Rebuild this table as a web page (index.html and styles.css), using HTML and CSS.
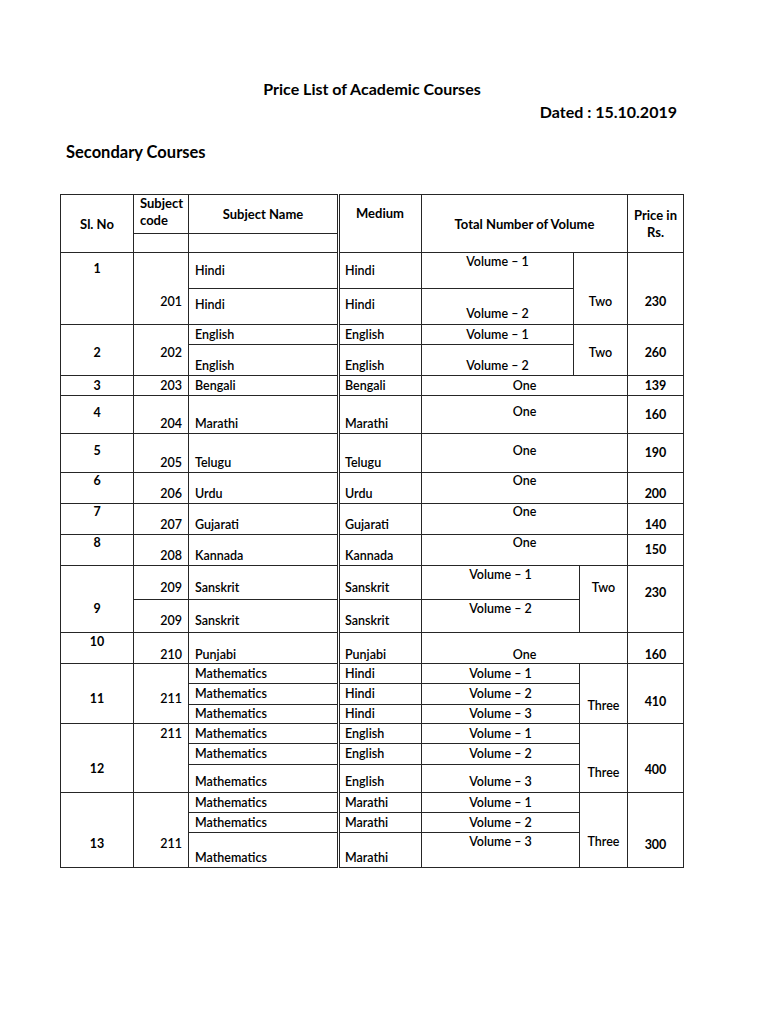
FILE: index.html
```html
<!DOCTYPE html>
<html lang="en">
<head>
<meta charset="utf-8">
<title>Price List of Academic Courses</title>
<link rel="stylesheet" href="styles.css">
</head>
<body>
<div class="page">
  <h1 class="title">Price List of Academic Courses</h1>
  <p class="dated">Dated : 15.10.2019</p>
  <h2 class="section">Secondary Courses</h2>
  <table class="price">
    <colgroup>
      <col class="w-sl"><col class="w-code"><col class="w-name"><col class="w-med"><col class="w-vol"><col class="w-gap"><col class="w-cnt"><col class="w-price">
    </colgroup>
    <thead>
      <tr class="h39">
        <th rowspan="2" class="c">Sl. No</th>
        <th class="l vt code-h">Subject<br>code</th>
        <th class="c">Subject Name</th>
        <th rowspan="2" class="c vt pt10 med">Medium</th>
        <th colspan="3" rowspan="2" class="c">Total Number of Volume</th>
        <th rowspan="2" class="c two-line">Price in<br>Rs.</th>
      </tr>
      <tr class="h19"><th></th><th></th></tr>
    </thead>
    <tbody>
      <tr class="h36">
        <td rowspan="2" class="sl vt pt8">1</td>
        <td rowspan="2" class="code vt pt41">201</td>
        <td class="name">Hindi</td>
        <td class="med">Hindi</td>
        <td class="c vt pt1">Volume – 1</td>
        <td colspan="2" rowspan="2" class="c vt pt41">Two</td>
        <td rowspan="2" class="amt vt pt41">230</td>
      </tr>
      <tr class="h36">
        <td class="name vt pt8">Hindi</td>
        <td class="med vt pt8">Hindi</td>
        <td class="c vb pb2">Volume – 2</td>
      </tr>

      <tr class="h20">
        <td rowspan="2" class="sl vt pt20">2</td>
        <td rowspan="2" class="code vt pt20">202</td>
        <td class="name">English</td>
        <td class="med">English</td>
        <td class="c">Volume – 1</td>
        <td colspan="2" rowspan="2" class="c vt pt20">Two</td>
        <td rowspan="2" class="amt vt pt20">260</td>
      </tr>
      <tr class="h31">
        <td class="name vb pb1">English</td>
        <td class="med vb pb1">English</td>
        <td class="c vb pb1">Volume – 2</td>
      </tr>

      <tr class="h20">
        <td class="sl">3</td>
        <td class="code">203</td>
        <td class="name">Bengali</td>
        <td class="med">Bengali</td>
        <td colspan="3" class="c">One</td>
        <td class="amt">139</td>
      </tr>

      <tr class="h38">
        <td class="sl vt pt9">4</td>
        <td class="code vb pb1">204</td>
        <td class="name vb pb1">Marathi</td>
        <td class="med vb pb1">Marathi</td>
        <td colspan="3" class="c vt pt8">One</td>
        <td class="amt">160</td>
      </tr>

      <tr class="h39">
        <td class="sl vt pt9">5</td>
        <td class="code vb pb1">205</td>
        <td class="name vb pb1">Telugu</td>
        <td class="med vb pb1">Telugu</td>
        <td colspan="3" class="c vt pt9">One</td>
        <td class="amt">190</td>
      </tr>

      <tr class="h31">
        <td class="sl vt">6</td>
        <td class="code vb pb1">206</td>
        <td class="name vb pb1">Urdu</td>
        <td class="med vb pb1">Urdu</td>
        <td colspan="3" class="c vt">One</td>
        <td class="amt vb pb1">200</td>
      </tr>

      <tr class="h31">
        <td class="sl vt">7</td>
        <td class="code vb pb1">207</td>
        <td class="name vb pb1">Gujarati</td>
        <td class="med vb pb1">Gujarati</td>
        <td colspan="3" class="c vt">One</td>
        <td class="amt vb pb1">140</td>
      </tr>

      <tr class="h31">
        <td class="sl vt">8</td>
        <td class="code vb pb1">208</td>
        <td class="name vb pb1">Kannada</td>
        <td class="med vb pb1">Kannada</td>
        <td colspan="3" class="c vt">One</td>
        <td class="amt">150</td>
      </tr>

      <tr class="h34">
        <td rowspan="2" class="sl vt pt35">9</td>
        <td class="code vb pb3">209</td>
        <td class="name vb pb3">Sanskrit</td>
        <td class="med vb pb3">Sanskrit</td>
        <td colspan="2" class="c vt pt1">Volume – 1</td>
        <td rowspan="2" class="c vt pt14">Two</td>
        <td rowspan="2" class="amt vt pt19">230</td>
      </tr>
      <tr class="h33">
        <td class="code vb pb3">209</td>
        <td class="name vb pb3">Sanskrit</td>
        <td class="med vb pb3">Sanskrit</td>
        <td colspan="2" class="c vt pt1">Volume – 2</td>
      </tr>

      <tr class="h31">
        <td class="sl vt pt1">10</td>
        <td class="code vb">210</td>
        <td class="name vb">Punjabi</td>
        <td class="med vb">Punjabi</td>
        <td colspan="3" class="c vb">One</td>
        <td class="amt vb">160</td>
      </tr>

      <tr class="h20">
        <td rowspan="3" class="sl vt pt27">11</td>
        <td rowspan="3" class="code vt pt27">211</td>
        <td class="name">Mathematics</td>
        <td class="med">Hindi</td>
        <td colspan="2" class="c">Volume – 1</td>
        <td rowspan="3" class="c vt pt34">Three</td>
        <td rowspan="3" class="amt vt pt30">410</td>
      </tr>
      <tr class="h21">
        <td class="name">Mathematics</td>
        <td class="med">Hindi</td>
        <td colspan="2" class="c">Volume – 2</td>
      </tr>
      <tr class="h19">
        <td class="name">Mathematics</td>
        <td class="med">Hindi</td>
        <td colspan="2" class="c">Volume – 3</td>
      </tr>

      <tr class="h20">
        <td rowspan="3" class="sl vt pt37">12</td>
        <td rowspan="3" class="code vt pt2">211</td>
        <td class="name">Mathematics</td>
        <td class="med">English</td>
        <td colspan="2" class="c">Volume – 1</td>
        <td rowspan="3" class="c vt pt41">Three</td>
        <td rowspan="3" class="amt vt pt38">400</td>
      </tr>
      <tr class="h21">
        <td class="name">Mathematics</td>
        <td class="med">English</td>
        <td colspan="2" class="c">Volume – 2</td>
      </tr>
      <tr class="h28">
        <td class="name vb pb2">Mathematics</td>
        <td class="med vb pb2">English</td>
        <td colspan="2" class="c vb pb2">Volume – 3</td>
      </tr>

      <tr class="h20">
        <td rowspan="3" class="sl vt pt43">13</td>
        <td rowspan="3" class="code vt pt43">211</td>
        <td class="name">Mathematics</td>
        <td class="med">Marathi</td>
        <td colspan="2" class="c">Volume – 1</td>
        <td rowspan="3" class="c vt pt41">Three</td>
        <td rowspan="3" class="amt vt pt44">300</td>
      </tr>
      <tr class="h20">
        <td class="name">Mathematics</td>
        <td class="med">Marathi</td>
        <td colspan="2" class="c">Volume – 2</td>
      </tr>
      <tr class="h35">
        <td class="name vb pb1">Mathematics</td>
        <td class="med vb pb1">Marathi</td>
        <td colspan="2" class="c vt pt1">Volume – 3</td>
      </tr>
    </tbody>
  </table>
</div>
</body>
</html>
```

FILE: styles.css
```css
html, body {
  margin: 0;
  padding: 0;
  background: #ffffff;
}

body {
  font-family: Lato, "Open Sans", "Liberation Sans", sans-serif;
  color: #000000;
}

.page {
  width: 624px;
  margin-left: 60px;
  padding-top: 79px;
}

.title {
  margin: 0;
  font-size: 16px;
  line-height: 20px;
  font-weight: 700;
  text-align: center;
}

.dated {
  margin: 3px 0 0;
  padding-right: 7px;
  font-size: 16px;
  line-height: 20px;
  font-weight: 700;
  text-align: right;
}

.section {
  margin: 19px 0 0;
  padding-left: 6px;
  font-size: 16.5px;
  line-height: 22px;
  font-weight: 700;
}

.price {
  margin-top: 31px;
  width: 624px;
  table-layout: fixed;
  border-collapse: collapse;
  font-size: 12.5px;
  line-height: 16px;
  font-weight: 600;
}

.w-sl { width: 73px; }
.w-code { width: 55px; }
.w-name { width: 150px; }
.w-med { width: 83px; }
.w-vol { width: 152px; }
.w-gap { width: 6px; }
.w-cnt { width: 48px; }
.w-price { width: 56px; }

.price th,
.price td {
  border: 1px solid #262626;
  padding: 0 6px;
  vertical-align: middle;
  white-space: nowrap;
  overflow: visible;
}

.price th {
  font-weight: 700;
  font-size: 13px;
}

.price .med {
  border-left: 3px double #262626;
  padding-left: 5px;
  text-align: left;
}

.price th.med { text-align: center; }

.code-h { line-height: 17px; padding-top: 3px; }
.two-line { line-height: 17px; }

.h19 { height: 19px; }
.h20 { height: 20px; }
.h21 { height: 21px; }
.h28 { height: 28px; }
.h31 { height: 31px; }
.h33 { height: 33px; }
.h34 { height: 34px; }
.h35 { height: 35px; }
.h36 { height: 36px; }
.h38 { height: 38px; }
.h39 { height: 39px; }

.c { text-align: center; }
.l { text-align: left; }
.sl { text-align: center; font-weight: 700; }
.code { text-align: right; }
.name { text-align: left; padding-left: 7px; }
.amt { text-align: center; font-weight: 700; }

.price .vt { vertical-align: top; }
.price .vb { vertical-align: bottom; }

.price .pt1 { padding-top: 1px; }
.price .pt2 { padding-top: 2px; }
.price .pt8 { padding-top: 8px; }
.price .pt9 { padding-top: 9px; }
.price .pt10 { padding-top: 10px; }
.price .pt14 { padding-top: 14px; }
.price .pt19 { padding-top: 19px; }
.price .pt20 { padding-top: 20px; }
.price .pt27 { padding-top: 27px; }
.price .pt30 { padding-top: 30px; }
.price .pt34 { padding-top: 34px; }
.price .pt35 { padding-top: 35px; }
.price .pt37 { padding-top: 37px; }
.price .pt38 { padding-top: 38px; }
.price .pt41 { padding-top: 41px; }
.price .pt43 { padding-top: 43px; }
.price .pt44 { padding-top: 44px; }
.price .pb1 { padding-bottom: 1px; }
.price .pb2 { padding-bottom: 2px; }
.price .pb3 { padding-bottom: 3px; }
```
